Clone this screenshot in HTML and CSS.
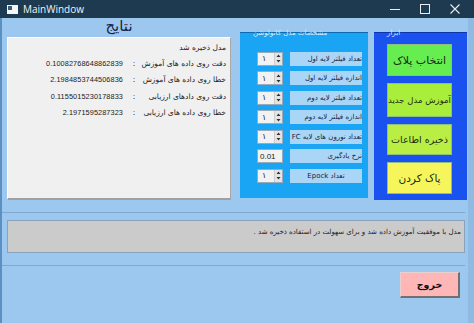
FILE: index.html
```html
<!DOCTYPE html>
<html lang="fa">
<head>
<meta charset="utf-8">
<title>MainWindow</title>
<link rel="stylesheet" href="styles.css">
</head>
<body>
<div class="window">
  <div class="titlebar">
    <svg class="app-icon" width="11" height="9" viewBox="0 0 11 9"><rect x="0" y="0" width="11" height="9" fill="#f4f6f8"/><rect x="1" y="1" width="4" height="4" fill="#3a5a78"/></svg>
    <span class="title">MainWindow</span>
    <div class="controls">
      <svg width="10" height="10" viewBox="0 0 10 10"><line x1="0" y1="5.5" x2="10" y2="5.5" stroke="#e8eef4" stroke-width="1"/></svg>
      <svg width="10" height="10" viewBox="0 0 10 10"><rect x="0.5" y="0.5" width="9" height="9" fill="none" stroke="#e8eef4" stroke-width="1"/></svg>
      <svg width="10" height="10" viewBox="0 0 10 10"><path d="M0.5 0.5 L9.5 9.5 M9.5 0.5 L0.5 9.5" stroke="#e8eef4" stroke-width="1.1"/></svg>
    </div>
  </div>
  <div class="content">
    <div class="top">
      <div class="results-col">
        <div class="results-title" dir="rtl">نتایج</div>
        <div class="results-panel" dir="rtl">
          <div class="saved">مدل ذخیره شد</div>
          <div class="res-grid">
            <div class="res-label">دقت روی داده های آموزش</div><div class="res-colon">:</div><div class="res-value" dir="ltr">0.10082768648862839</div>
            <div class="res-label">خطا روی داده های آموزش</div><div class="res-colon">:</div><div class="res-value" dir="ltr">2.1984853744506836</div>
            <div class="res-label">دقت روی دادهای ارزیابی</div><div class="res-colon">:</div><div class="res-value" dir="ltr">0.1155015230178833</div>
            <div class="res-label">خطا روی داده های ارزیابی</div><div class="res-colon">:</div><div class="res-value" dir="ltr">2.1971595287323</div>
          </div>
        </div>
      </div>

      <div class="group params">
        <div class="group-head"><span dir="rtl">مشخصات مدل کانولوشن</span></div>
        <div class="param-rows">
          <div class="prow"><div class="num"><span>١</span><span class="spin"><svg width="5" height="9" viewBox="0 0 5 9"><path d="M2.5 0.5 L4.5 3 L0.5 3 Z M2.5 8.5 L4.5 6 L0.5 6 Z" fill="#333"/></svg></span></div><div class="plabel" dir="rtl">تعداد فیلتر لایه اول</div></div>
          <div class="prow"><div class="num"><span>١</span><span class="spin"><svg width="5" height="9" viewBox="0 0 5 9"><path d="M2.5 0.5 L4.5 3 L0.5 3 Z M2.5 8.5 L4.5 6 L0.5 6 Z" fill="#333"/></svg></span></div><div class="plabel" dir="rtl">اندازه فیلتر لایه اول</div></div>
          <div class="prow"><div class="num"><span>١</span><span class="spin"><svg width="5" height="9" viewBox="0 0 5 9"><path d="M2.5 0.5 L4.5 3 L0.5 3 Z M2.5 8.5 L4.5 6 L0.5 6 Z" fill="#333"/></svg></span></div><div class="plabel" dir="rtl">تعداد فیلتر لایه دوم</div></div>
          <div class="prow"><div class="num"><span>١</span><span class="spin"><svg width="5" height="9" viewBox="0 0 5 9"><path d="M2.5 0.5 L4.5 3 L0.5 3 Z M2.5 8.5 L4.5 6 L0.5 6 Z" fill="#333"/></svg></span></div><div class="plabel" dir="rtl">اندازه فیلتر لایه دوم</div></div>
          <div class="prow"><div class="num"><span>١</span><span class="spin"><svg width="5" height="9" viewBox="0 0 5 9"><path d="M2.5 0.5 L4.5 3 L0.5 3 Z M2.5 8.5 L4.5 6 L0.5 6 Z" fill="#333"/></svg></span></div><div class="plabel" dir="rtl">تعداد نورون های لایه FC</div></div>
          <div class="prow"><div class="num plain"><span>0.01</span></div><div class="plabel" dir="rtl">نرخ یادگیری</div></div>
          <div class="prow"><div class="num"><span>١</span><span class="spin"><svg width="5" height="9" viewBox="0 0 5 9"><path d="M2.5 0.5 L4.5 3 L0.5 3 Z M2.5 8.5 L4.5 6 L0.5 6 Z" fill="#333"/></svg></span></div><div class="plabel center" dir="rtl">تعداد Epock</div></div>
        </div>
      </div>

      <div class="group tools">
        <div class="group-head"><span dir="rtl">ابزار</span></div>
        <div class="btns">
          <div class="btn b1" dir="rtl">انتخاب پلاک</div>
          <div class="btn b2" dir="rtl">آموزش مدل جدید</div>
          <div class="btn b3" dir="rtl">ذخیره اطاعات</div>
          <div class="btn b4" dir="rtl">پاک کردن</div>
        </div>
      </div>
    </div>

    <div class="sep"></div>
    <div class="status" dir="rtl">مدل با موفقیت آموزش داده شد و برای سهولت در استفاده ذخیره شد .</div>
    <div class="sep sep2"></div>
    <div class="footer">
      <div class="exit" dir="rtl">خروج</div>
    </div>
  </div>
</div>
</body>
</html>
```

FILE: styles.css
```css
* { box-sizing: border-box; }
html, body { margin: 0; padding: 0; }
body { width: 474px; height: 323px; overflow: hidden; background: #2a4256; font-family: "DejaVu Sans", "Noto Sans", sans-serif; }

.window { width: 474px; height: 323px; display: flex; flex-direction: column; }

.titlebar {
  height: 18px; background: #1d3a50; color: #f0f4f8;
  display: flex; align-items: center; padding-left: 7px;
}
.app-icon { display: block; }
.title { font-family: "Open Sans", "Noto Sans", sans-serif; font-size: 10px; margin-left: 5px; }
.controls { margin-left: auto; display: flex; align-items: center; gap: 20px; padding-right: 14px; }
.controls svg { display: block; }

.content {
  flex: 1; background: #9cc8ef;
  border-left: 2px solid #5c8fc2; border-right: 6px solid #8fbbe2;
  display: flex; flex-direction: column;
}

.top { display: flex; align-items: flex-start; height: 194px; }

.results-col { width: 224px; margin-left: 5px; }
.results-title { height: 19px; text-align: center; font-size: 15px; line-height: 17px; color: #16244c; padding-top: 0; }
.results-panel {
  height: 163px; background: #f0f0f0;
  border-top: 1px solid #ffffff; border-left: 1px solid #ffffff;
  border-right: 1px solid #a8a8a8; border-bottom: 2px solid #a0a0a0;
  padding: 3px 4px 0 0;
}
.saved { font-size: 7.5px; line-height: 13px; color: #222; }
.res-grid {
  display: grid; grid-template-columns: 81px 22px 115px;
  margin-top: 2px; font-size: 7.5px; color: #222;
}
.res-grid > div { height: 16.3px; line-height: 16.3px; white-space: nowrap; }
.res-label { text-align: right; }
.res-colon { text-align: center; }
.res-value { text-align: right; font-family: "Liberation Sans", Arial, sans-serif; font-size: 7.3px; letter-spacing: 0.1px; }

.group { position: relative; margin-top: 14px; }
.group-head {
  height: 2px; border-top: 1px solid rgba(0,0,40,0.35);
  position: relative;
}
.group-head span {
  position: absolute; top: -4px; left: 12px;
  font-size: 7px; line-height: 9px; color: #d8ecff; padding: 0 1px;
}

.params { width: 128px; height: 166px; background: #1aa4f4; margin-left: 9px; }
.param-rows { padding: 17px 6px 0 17px; display: flex; flex-direction: column; gap: 4.5px; }
.prow { display: flex; align-items: center; gap: 7px; height: 15px; }
.num {
  width: 26px; height: 14px; background: #f2f2f2; border: 1px solid #9ab;
  display: flex; align-items: center; justify-content: space-between;
  padding-left: 4px; font-size: 8px; color: #222;
}
.num.plain { font-family: "Liberation Sans", Arial, sans-serif; font-size: 8px; padding-left: 2px; }
.spin { width: 8px; height: 12px; background: #e4e4e4; display: flex; align-items: center; justify-content: center; border-left: 1px solid #ccc; }
.spin svg { display: block; }
.plabel {
  width: 72px; height: 14px; background: #a9d6f7; font-size: 7px; line-height: 14px;
  color: #1a2040; text-align: right; padding-right: 0; white-space: nowrap; overflow: hidden;
}
.plabel.center { text-align: center; }

.tools { width: 93px; height: 168px; background: #1a52f0; margin-left: 6px; }
.btns { padding: 10px 15px 0 13px; display: flex; flex-direction: column; gap: 7px; }
.btn {
  height: 32px; display: flex; align-items: center; justify-content: center;
  color: #1a2a10; border: 1px solid #8fbf80; white-space: nowrap;
}
.b1 { background: #66ee50; font-size: 11px; }
.b2 { background: #aaee3c; font-size: 8.5px; height: 34px; }
.b3 { background: #b9ef44; font-size: 9.5px; height: 31px; }
.b4 { background: #f6f65c; font-size: 10.5px; }

.sep { height: 1px; background: #7ea8cf; margin-top: 0; width: 463px; }
.status {
  margin: 7px 0 0 5px; width: 458px; height: 33px; background: #cbcbcb;
  border: 1px solid #8aa2bb; font-size: 7px; color: #222; padding: 7px 3px 0 0;
}
.sep2 { margin-top: 12px; }
.footer { display: flex; justify-content: flex-end; padding: 6px 8px 0 0; }
.exit {
  width: 60px; height: 26px; background: #ffb6b6;
  border-right: 2px solid #707070; border-bottom: 2px solid #707070;
  border-top: 1px solid #e8d0d0; border-left: 1px solid #e8d0d0;
  display: flex; align-items: center; justify-content: center;
  font-size: 9.5px; font-weight: bold; color: #111;
}
```
